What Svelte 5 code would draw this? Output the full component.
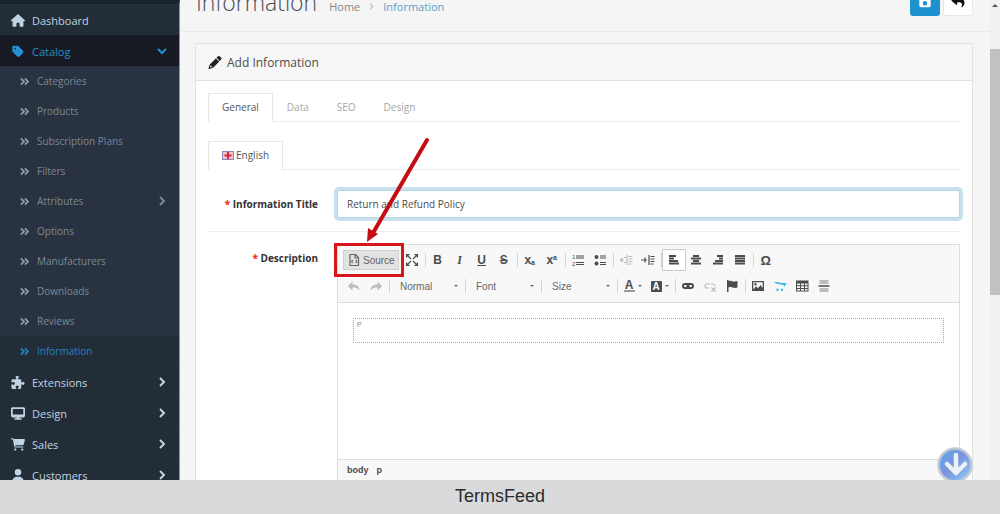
<script lang="ts">
  // OpenCart admin: the "Add Information" form with its rich text editor, plus the callout on Source.

  interface Shape {
    /** Filled outline, on a 16 x 16 grid. */
    fill?: string;
    /** Stroked line, on the same grid. */
    line?: string;
  }

  const solid = {
    house: {
      box: "0 0 576 512",
      d: "M575.8 255.5c0 18-15 32.1-32 32.1h-32l.7 160.2c0 2.7-.2 5.4-.5 8.1V472c0 22.1-17.9 40-40 40H392c-22.1 0-40-17.9-40-40v-88c0-17.7-14.3-32-32-32h-64c-17.7 0-32 14.3-32 32v88c0 22.1-17.9 40-40 40h-80c-22.1 0-40-17.9-40-40V287.6H32c-18 0-32-14-32-32.1c0-9 3-17 10-24L266.4 8c7-7 15-8 22-8s15 2 21 7L564.8 231.5c8 7 12 15 11 24z",
    },
    tag: {
      box: "0 0 448 512",
      d: "M0 80V229.5c0 17 6.7 33.3 18.7 45.3l176 176c25 25 65.5 25 90.5 0L418.7 317.3c25-25 25-65.5 0-90.5l-176-176c-12-12-28.3-18.7-45.3-18.7H48C21.5 32 0 53.5 0 80zm112 32a32 32 0 1 1 0 64 32 32 0 1 1 0-64z",
    },
    puzzle: {
      box: "0 0 512 512",
      d: "M192 104.8c0-9.2-5.8-17.3-13.2-22.8C167.2 73.3 160 61.3 160 48c0-26.5 28.7-48 64-48s64 21.5 64 48c0 13.3-7.2 25.3-18.8 34c-7.4 5.5-13.2 13.6-13.2 22.8c0 12.8 10.4 23.2 23.2 23.2H336c26.5 0 48 21.5 48 48v56.8c0 12.8 10.4 23.2 23.2 23.2c9.2 0 17.3-5.8 22.8-13.2c8.7-11.6 20.7-18.8 34-18.8c26.5 0 48 28.7 48 64s-21.5 64-48 64c-13.3 0-25.3-7.2-34-18.8c-5.5-7.4-13.6-13.2-22.8-13.2c-12.8 0-23.2 10.4-23.2 23.2V464c0 26.5-21.5 48-48 48H279.2c-12.8 0-23.2-10.4-23.2-23.2c0-9.2 5.8-17.3 13.2-22.8c11.6-8.7 18.8-20.7 18.8-34c0-26.5-28.7-48-64-48s-64 21.5-64 48c0 13.3 7.2 25.3 18.8 34c7.4 5.5 13.2 13.6 13.2 22.8c0 12.8-10.4 23.2-23.2 23.2H48c-26.5 0-48-21.5-48-48V343.2C0 330.4 10.4 320 23.2 320c9.2 0 17.3 5.8 22.8 13.2C54.7 344.8 66.7 352 80 352c26.5 0 48-28.7 48-64s-21.5-64-48-64c-13.3 0-25.3 7.2-34 18.8C40.5 250.2 32.4 256 23.2 256C10.4 256 0 245.6 0 232.8V176c0-26.5 21.5-48 48-48H168.8c12.8 0 23.2-10.4 23.2-23.2z",
    },
    desktop: {
      box: "0 0 576 512",
      d: "M64 0C28.7 0 0 28.7 0 64V352c0 35.3 28.7 64 64 64H240l-10.7 32H160c-17.7 0-32 14.3-32 32s14.3 32 32 32H416c17.7 0 32-14.3 32-32s-14.3-32-32-32H346.7L336 416H512c35.3 0 64-28.7 64-64V64c0-35.3-28.7-64-64-64H64zM504 72V296H72V72H504z",
    },
    cart: {
      box: "0 0 576 512",
      d: "M0 24C0 10.7 10.7 0 24 0H69.5c22 0 41.5 12.8 50.6 32h411c26.3 0 45.5 25 38.6 50.4l-41 152.3c-8.5 31.4-37 53.3-69.5 53.3H170.7l5.4 28.5c2.2 11.3 12.1 19.5 23.6 19.5H488c13.3 0 24 10.7 24 24s-10.7 24-24 24H199.7c-34.6 0-64.3-24.6-70.7-58.5L77.4 54.5c-.7-3.8-4-6.500-7.9-6.500H24C10.7 48 0 37.3 0 24zM128 464a48 48 0 1 1 96 0 48 48 0 1 1 -96 0zm336-48a48 48 0 1 1 0 96 48 48 0 1 1 0-96z",
    },
    user: {
      box: "0 0 448 512",
      d: "M224 256A128 128 0 1 0 224 0a128 128 0 1 0 0 256zm-45.7 48C79.8 304 0 383.8 0 482.3C0 498.7 13.3 512 29.7 512H418.3c16.4 0 29.7-13.3 29.7-29.7C448 383.8 368.2 304 269.7 304H178.3z",
    },
    pencil: {
      box: "0 0 512 512",
      d: "M410.3 231l11.3-11.3-33.9-33.9-62.1-62.1L291.7 89.8l-11.3 11.3-22.6 22.6L58.6 322.9c-10.4 10.4-18 23.3-22.2 37.4L1 480.7c-2.5 8.4-.2 17.5 6.1 23.7s15.3 8.5 23.7 6.1l120.3-35.4c14.1-4.2 27-11.8 37.4-22.2L387.7 253.7 410.3 231zM160 412l-4 14c-4 3.100-3.500 1.400-8.300 2.900L82 448l-18-18 19-64c1.400-4.900 3-6 5-8l12-4v42c0 8.800 7.200 16 16 16h44zM362.7 18.7L348.3 33.2 325.7 55.8 314.3 67.1l33.9 33.9 62.1 62.1 33.9 33.9 11.3-11.3 22.6-22.6 14.5-14.5c25-25 25-65.5 0-90.5L453.3 18.7c-25-25-65.5-25-90.5 0z",
    },
    save: {
      box: "0 0 448 512",
      d: "M64 32C29 32 0 61 0 96v320c0 35 29 64 64 64h320c35 0 64-29 64-64V173c0-17-7-33-19-45l-77-77c-12-12-28-19-45-19H64zm20 44h230v110H84zM224 240c50 0 84 34 84 88s-34 88-84 88s-84-34-84-88s34-88 84-88z",
    },
    reply: {
      box: "0 0 512 512",
      d: "M205 34.8c11.5 5.1 19 16.6 19 29.2v64H336c97.2 0 176 78.8 176 176c0 113.3-81.5 163.9-100.2 174.1c-2.5 1.4-5.3 1.9-8.1 1.9c-10.9 0-19.7-8.9-19.7-19.7c0-7.5 4.3-14.4 9.8-19.5c9.4-8.8 22.2-26.4 22.2-56.7c0-53-43-96-96-96H224v64c0 12.6-7.4 24.1-19 29.2s-25 3-34.4-5.4l-160-144C3.9 225.7 0 217.1 0 208s3.9-17.7 10.6-23.8l160-144c9.4-8.5 22.9-10.6 34.4-5.4z",
    },
  };

  const shapes: Record<string, Shape> = {
    source: { line: "M4 2.5h5.5l3 3v8h-8.5zM9 2.5v3.5h3.5M6.8 8L5.6 9.5l1.2 1.5M9.7 8l1.2 1.5-1.2 1.5" },
    maximize: {
      fill: "M2 2h4L2 6zM14 2v4l-4-4zM2 14v-4l4 4zM14 14h-4l4-4z",
      line: "M3 3l4 4M13 3L9 7M3 13l4-4M13 13L9 9",
    },
    outdent: { line: "M2 8h4M9 3v10M10.5 4.5h4M10.5 7h4M10.5 9.5h4M10.5 12h3M6 5.5h2M6 10.5h2M4.5 6L2.5 8l2 2" },
    indent: { line: "M1 8h6M5 5.5v5M9 3v10M10.5 4.5h4M10.5 7h4M10.5 9.5h4M10.5 12h3" },
    left: { fill: "M3 3h7v2H3zM3 5.500h5v2H3zM3 8h9v2H3zM3 10.500h10v2H3z" },
    center: { fill: "M5 3h6v2H5zM3 5.500h10v2H3zM5 8h6v2H5zM3 10.500h10v2H3z" },
    right: { fill: "M7 3h6v2H7zM9 5.500h4v2H9zM5 8h8v2H5zM3 10.500h10v2H3z" },
    justify: { fill: "M3 3h10v2H3zM3 5.500h10v2H3zM3 8h10v2H3zM3 10.500h10v2H3z" },
    undo: { fill: "M6.5 3.5v3C11 6.5 13.3 8.5 13.5 12.5C11.5 10 9.5 9.5 6.5 9.5v3L2 8z" },
    redo: { fill: "M9.5 3.5v3C5 6.5 2.7 8.5 2.5 12.5C4.5 10 6.5 9.5 9.5 9.5v3L14 8z" },
    link: {
      fill: "M5 5h6a3 3 0 0 1 0 6H5a3 3 0 0 1 0-6zM5 7a1 1 0 0 0 0 2h1.5V7zM11 7H9.5v2H11a1 1 0 0 0 0-2z",
    },
    unlink: { line: "M8 6H5a2 2 0 0 0 0 4h2M9 6h2a2 2 0 0 1 2 2M9.5 9.5l4 4M13.5 9.5l-4 4" },
    flag: { fill: "M3 2h1.5v1C7 1.8 8.5 4.5 13.5 3v6.5C9.5 11 7.5 8 4.5 9.5V14H3z" },
    image: { fill: "M2 3h12v10H2zM3.3 4.3v7.2l2.7-3.2 2 2 2.6-3.3 2.1 3V4.3zM5.5 5a1.2 1.2 0 1 1 0 2.4a1.2 1.2 0 1 1 0-2.4z" },
    cart: {
      fill: "M2 4h3.5c3 1.5 6 .5 9.5 1.5c-1.5 1-2 2.5-3.5 4c.8-1.5.5-2.3-.5-2.7c-3-.8-6-.3-9-2.8zM5.5 10.5a1.2 1.2 0 1 1 0 2.4a1.2 1.2 0 1 1 0-2.4zM10 10.5a1.2 1.2 0 1 1 0 2.4a1.2 1.2 0 1 1 0-2.4z",
    },
    table: { fill: "M2 2.5h12.5v11H2zM3 5.5v1.8h3V5.5zM7 5.5v1.8h3V5.5zM11 5.5v1.8h2.5V5.5zM3 8.3v1.7h3V8.3zM7 8.3v1.7h3V8.3zM11 8.3v1.7h2.5V8.3zM3 11v1.5h3V11zM7 11v1.5h3V11zM11 11v1.5h2.5V11z" },
  };

  const submenu = [
    "Categories",
    "Products",
    "Subscription Plans",
    "Filters",
    "Attributes",
    "Options",
    "Manufacturers",
    "Downloads",
    "Reviews",
    "Information",
  ];

  const sections = [
    { label: "Extensions", icon: solid.puzzle },
    { label: "Design", icon: solid.desktop },
    { label: "Sales", icon: solid.cart },
    { label: "Customers", icon: solid.user },
  ];

  const tabs = ["General", "Data", "SEO", "Design"];
  let activeTab = $state("General");
  let title = $state("Return and Refund Policy");
</script>

{#snippet icon(i: { box: string; d: string })}
  <svg class="icon" viewBox={i.box} aria-hidden="true"><path d={i.d} fill="currentColor" fill-rule="evenodd" /></svg>
{/snippet}

{#snippet chevron(kind: string)}
  <svg class="chevron" class:down={kind === "down"} viewBox="0 0 10 10" aria-hidden="true">
    <path d="M3 1l4 4-4 4" />
  </svg>
{/snippet}

{#snippet glyph(name: string)}
  <svg class="glyph" viewBox="0 0 16 16" aria-hidden="true">
    {#if shapes[name].fill}<path d={shapes[name].fill} fill="currentColor" fill-rule="evenodd" />{/if}
    {#if shapes[name].line}<path d={shapes[name].line} fill="none" stroke="currentColor" stroke-width="1.2" />{/if}
  </svg>
{/snippet}

{#snippet tool(name: string, state: string = "")}
  <button type="button" class="tool {state}" aria-label={name}>{@render glyph(name)}</button>
{/snippet}

{#snippet combo(name: string, value: string)}
  <span class="combo">
    <select aria-label={name}><option>{value}</option></select>
    <i class="caret"></i>
  </span>
{/snippet}

<div class="shell">
  <div class="viewport">
    <nav class="sidebar">
      <ul class="menu">
        <li><a href="#dashboard">{@render icon(solid.house)}<span>Dashboard</span></a></li>
        <li>
          <a href="#catalog" class="open">{@render icon(solid.tag)}<span>Catalog</span>{@render chevron("down")}</a>
          <ul class="submenu">
            {#each submenu as label}
              <li>
                <a href="#{label}" class:current={label === "Information"}>
                  <svg class="angles" viewBox="0 0 10 10" aria-hidden="true"><path d="M1 1.5L4.5 5 1 8.5M5.5 1.5L9 5 5.5 8.5" /></svg>
                  <span>{label}</span>
                  {#if label === "Attributes"}{@render chevron("right")}{/if}
                </a>
              </li>
            {/each}
          </ul>
        </li>
        {#each sections as section}
          <li>
            <a href="#{section.label}">{@render icon(section.icon)}<span>{section.label}</span>{@render chevron("right")}</a>
          </li>
        {/each}
      </ul>
    </nav>

    <main class="content">
      <header class="page-header">
        <div class="heading">
          <h1>Information</h1>
          <div class="crumbs">
            <a href="#home">Home</a>
            {@render chevron("right")}
            <a href="#information" class="here">Information</a>
          </div>
        </div>
        <div class="actions">
          <button type="button" class="save" aria-label="Save">{@render icon(solid.save)}</button>
          <button type="button" class="back" aria-label="Back">{@render icon(solid.reply)}</button>
        </div>
      </header>

      <section class="card">
        <h2>{@render icon(solid.pencil)}Add Information</h2>
        <form class="card-body">
          <div class="tabs">
            {#each tabs as tab}
              <button type="button" class:active={tab === activeTab} onclick={() => (activeTab = tab)}>{tab}</button>
            {/each}
          </div>
          <div class="tabs language">
            <button type="button" class="active">
              <svg class="flag" viewBox="0 0 12 9" aria-hidden="true">
                <rect width="12" height="9" fill="#8b86b5" />
                <rect x="1" y="1" width="10" height="7" fill="#f3c4cc" />
                <path d="M6 1v7M2.5 4.5h7" stroke="#d5283c" stroke-width="2" />
              </svg>
              English
            </button>
          </div>

          <div class="row">
            <label for="title"><b>*</b> Information Title</label>
            <input id="title" type="text" bind:value={title} />
          </div>
          <div class="row description">
            <span class="label" id="description-label"><b>*</b> Description</span>
            <div class="editor">
              <div class="toolbar">
                <div class="tools">
                  <div class="callout">
                    <button type="button" class="source">{@render glyph("source")}Source</button>
                    <span class="frame"></span>
                    <svg class="arrow" viewBox="0 0 70 108" aria-hidden="true">
                      <path d="M64 4L10 97" stroke="#c40d12" stroke-width="4" stroke-linecap="round" />
                      <path d="M4 106l1-14 10 6z" fill="#c40d12" />
                    </svg>
                  </div>
                  {@render tool("maximize")}
                  <i class="sep"></i>
                  <button type="button" class="tool letter">B</button>
                  <button type="button" class="tool letter italic">I</button>
                  <button type="button" class="tool letter under">U</button>
                  <button type="button" class="tool letter strike">S</button>
                  <i class="sep"></i>
                  <button type="button" class="tool letter">x<sub>a</sub></button>
                  <button type="button" class="tool letter">x<sup>a</sup></button>
                  <i class="sep"></i>
                  <button type="button" class="tool" aria-label="numbered list">
                    <svg class="glyph" viewBox="0 0 16 16">
                      <path d="M6 4h8M6 6h8M6 10.5h8M6 12.5h8" stroke="currentColor" stroke-width="1.2" />
                      <text x="2" y="7">1</text>
                      <text x="2" y="14">2</text>
                    </svg>
                  </button>
                  <button type="button" class="tool" aria-label="bulleted list">
                    <svg class="glyph" viewBox="0 0 16 16">
                      <path d="M8 4h6M8 6h6M8 10.5h6M8 12.5h6" stroke="currentColor" stroke-width="1.2" />
                      <circle cx="4.5" cy="5" r="2" fill="currentColor" />
                      <circle cx="4.5" cy="11.5" r="2" fill="currentColor" />
                    </svg>
                  </button>
                  <i class="sep"></i>
                  {@render tool("outdent", "off")}
                  {@render tool("indent")}
                  <i class="sep"></i>
                  {@render tool("left", "on")}
                  {@render tool("center")}
                  {@render tool("right")}
                  {@render tool("justify")}
                  <i class="sep"></i>
                  <button type="button" class="tool letter omega">Ω</button>
                </div>
                <div class="tools">
                  {@render tool("undo", "off")}
                  {@render tool("redo", "off")}
                  <i class="sep"></i>
                  {@render combo("Format", "Normal")}
                  <i class="sep"></i>
                  {@render combo("Font", "Font")}
                  <i class="sep"></i>
                  {@render combo("Size", "Size")}
                  <i class="sep"></i>
                  <button type="button" class="tool letter color"><span class="ink">A</span><i class="caret"></i></button>
                  <button type="button" class="tool letter color"><span class="fill">A</span><i class="caret"></i></button>
                  <i class="sep"></i>
                  {@render tool("link")}
                  {@render tool("unlink", "off")}
                  {@render tool("flag")}
                  <i class="sep"></i>
                  {@render tool("image")}
                  {@render tool("cart", "brand")}
                  {@render tool("table")}
                  <button type="button" class="tool" aria-label="horizontal line">
                    <svg class="glyph" viewBox="0 0 16 16">
                      <path d="M3.5 2h9v4h-9zM3.5 10h9v4h-9z" fill="#bcbcbc" />
                      <path d="M2.5 8h11" stroke="currentColor" stroke-width="1.5" />
                    </svg>
                  </button>
                </div>
              </div>
              <div class="canvas" role="textbox" tabindex="0" aria-labelledby="description-label">
                <div class="block"><span>P</span></div>
              </div>
              <div class="path"><span>body</span><span>p</span></div>
            </div>
          </div>
        </form>
      </section>
    </main>

    <div class="scrollbar">
      <i class="up"></i>
      <i class="thumb"></i>
    </div>

    <svg class="badge" viewBox="0 0 36 36" aria-hidden="true">
      <defs>
        <linearGradient id="orb" x1="0" y1="0" x2="1" y2="1">
          <stop offset="0" stop-color="#58b0ee" />
          <stop offset="0.45" stop-color="#7a92e0" />
          <stop offset="1" stop-color="#8fd0f6" />
        </linearGradient>
      </defs>
      <circle cx="18" cy="18" r="16.5" fill="url(#orb)" stroke="#c3cad2" stroke-width="2.5" />
      <path d="M19 8v18M10 17l9 9 9-9" fill="none" stroke="#eef0f4" stroke-width="4.5" stroke-linecap="round" stroke-linejoin="round" />
    </svg>
  </div>

  <footer>TermsFeed</footer>
</div>

<style>
  :global(body) {
    background: #d8dadc;
  }
  .shell {
    display: flex;
    flex-direction: column;
    height: 100vh;
    font-family: "Open Sans", sans-serif;
    font-size: 10px;
    color: #4c4c4c;
  }
  .viewport {
    position: relative;
    flex: 1;
    min-height: 0;
    display: flex;
    overflow: hidden;
    background: #f5f5f5;
  }
  button,
  input,
  select {
    font: inherit;
    color: inherit;
    margin: 0;
  }
  button {
    padding: 0;
    border: 0;
    background: none;
  }
  a {
    color: inherit;
    text-decoration: none;
  }
  ul {
    list-style: none;
    margin: 0;
    padding: 0;
  }
  svg {
    display: block;
    flex: none;
  }
  .icon {
    width: 14px;
    height: 13px;
  }
  .chevron {
    width: 10px;
    height: 10px;
  }
  .chevron path,
  .angles path {
    fill: none;
    stroke: currentColor;
    stroke-width: 2;
  }
  .chevron.down {
    transform: rotate(90deg);
  }

  /* Sidebar */
  .sidebar {
    flex: none;
    width: 179px;
    background: #232d37;
    border-top: 4px solid #1a2430;
    border-right: 1px solid #8b939b;
  }
  .menu > li > a {
    display: flex;
    align-items: center;
    gap: 7px;
    box-sizing: border-box;
    height: 31px;
    padding: 0 12px 0 11px;
    border-top: 1px solid #27323c;
    font-size: 11px;
    color: #c0d3e2;
  }
  .menu a span {
    flex: 1;
  }
  .menu > li > a.open {
    background: #171a22;
    border-color: #171a22;
    color: #2390d2;
  }
  .submenu {
    background: #293241;
  }
  .submenu a {
    display: flex;
    align-items: center;
    gap: 8px;
    height: 30px;
    padding: 0 12px 0 20px;
    color: #7b8994;
  }
  .submenu a.current {
    background: #232d37;
    color: #2382c0;
  }
  .angles {
    width: 9px;
    height: 9px;
    color: #8d9ba7;
  }
  .current .angles {
    color: inherit;
  }

  /* Page header, scrolled partly out of view */
  .content {
    flex: 1;
    min-width: 0;
    margin-top: -23px;
  }
  .page-header {
    display: flex;
    justify-content: space-between;
    padding: 9px 17px 15px 16px;
    border-bottom: 1px solid #ebebeb;
  }
  .heading {
    display: flex;
    align-items: baseline;
    gap: 12px;
    height: 30px;
  }
  h1 {
    margin: 0;
    font-size: 23px;
    line-height: 32px;
    font-weight: 300;
    color: #4c4d5a;
  }
  .crumbs {
    display: flex;
    align-items: center;
    gap: 8px;
    font-size: 11px;
    color: #858585;
  }
  .crumbs .chevron {
    width: 7px;
    height: 7px;
    color: #c8c8c8;
  }
  .here {
    color: #5a9fc9;
  }
  .actions {
    display: flex;
    gap: 3px;
  }
  .actions button {
    display: grid;
    place-items: center;
    width: 30px;
    height: 30px;
    border-radius: 3px;
  }
  .save {
    background: #1e91cf;
    color: #fff;
  }
  .back {
    background: #fff;
    box-shadow: inset 0 0 0 1px #e8e8e8;
    color: #111;
  }

  /* Card */
  .card {
    margin: 11px 17px 0 15px;
    border: 1px solid #e2e2e2;
    background: #fff;
  }
  h2 {
    display: flex;
    align-items: center;
    gap: 5px;
    height: 36px;
    margin: 0;
    padding: 0 12px;
    border-bottom: 1px solid #e2e2e2;
    background: #f7f7f7;
    font-size: 12px;
    font-weight: 400;
  }
  h2 .icon {
    color: #222;
  }
  .card-body {
    padding: 12px;
  }
  .tabs {
    display: flex;
    border-bottom: 1px solid #eee;
  }
  .tabs button {
    display: flex;
    align-items: center;
    gap: 2px;
    box-sizing: border-box;
    height: 29px;
    padding: 0 13px 2px;
    border: 1px solid transparent;
    border-bottom: 0;
    margin-bottom: -1px;
    color: #a6a6a6;
  }
  .tabs button.active {
    border-color: #e8e8e8;
    background: #fff;
    color: #555;
  }
  .language {
    margin-top: 19px;
  }
  .flag {
    width: 12px;
    height: 9px;
  }
  .row {
    display: grid;
    grid-template-columns: 110px 1fr;
    gap: 19px;
    padding: 20px 0 13px;
    border-bottom: 1px solid #eee;
  }
  .row.description {
    padding-top: 12px;
  }
  .row label,
  .label {
    padding-top: 7px;
    line-height: 15px;
    font-weight: 700;
    text-align: right;
    color: #333;
  }
  .row b {
    color: #e33;
  }
  input {
    box-sizing: border-box;
    width: 100%;
    height: 28px;
    padding: 0 9px;
    border: 1px solid #b4d6e8;
    border-radius: 2px;
    outline: 0;
    background: #fff;
    box-shadow: 0 0 0 3px #c9e1ee;
  }

  /* Editor */
  .editor {
    border: 1px solid #dcdcdc;
    font-family: "Liberation Sans", sans-serif;
    font-size: 10px;
    color: #4c4c4c;
  }
  .toolbar {
    display: flex;
    flex-direction: column;
    gap: 4px;
    padding: 4px 5px 5px;
    border-bottom: 1px solid #dcdcdc;
    background: #f8f8f8;
  }
  .tools {
    display: flex;
    align-items: center;
    height: 22px;
  }
  .callout {
    position: relative;
    margin-right: 2px;
  }
  .source {
    display: flex;
    align-items: center;
    gap: 1px;
    box-sizing: border-box;
    height: 20px;
    padding: 0 3px 0 2px;
    border: 1px solid #cfcfcf;
    background: #e2e2e2;
    color: #666;
  }
  .frame {
    position: absolute;
    inset: -7px -5px -7px -9px;
    border: 3px solid #d8151b;
    pointer-events: none;
  }
  .arrow {
    position: absolute;
    left: 20px;
    bottom: 26px;
    width: 70px;
    height: 108px;
    pointer-events: none;
  }
  .glyph {
    width: 16px;
    height: 16px;
  }
  .glyph text {
    font-size: 6px;
    fill: currentColor;
  }
  .tool {
    display: flex;
    align-items: center;
    justify-content: center;
    width: 22px;
    height: 20px;
  }
  .tool.off {
    color: #bdbdbd;
  }
  .tool.brand {
    color: #35b5e8;
  }
  .tool.on {
    background: #fff;
    box-shadow: 0 0 0 1px #ccc;
  }
  .letter {
    font-size: 12px;
    font-weight: 700;
  }
  .italic {
    font-family: "Liberation Serif", serif;
    font-style: italic;
  }
  .under {
    text-decoration: underline;
  }
  .strike {
    text-decoration: line-through;
  }
  .omega {
    font-size: 13px;
  }
  .letter sub,
  .letter sup {
    font-size: 7px;
    line-height: 1;
  }
  .letter sub {
    padding-top: 5px;
  }
  .letter sup {
    padding-bottom: 5px;
  }
  .color {
    gap: 3px;
    width: 27px;
  }
  .ink {
    width: 11px;
    border-bottom: 2px solid #999;
    line-height: 10px;
  }
  .fill {
    width: 11px;
    border-radius: 1px;
    background: #4c4c4c;
    color: #fff;
    font-size: 10px;
    line-height: 11px;
  }
  .caret {
    border: 2px solid transparent;
    border-top-color: #666;
    border-bottom: 0;
  }
  .sep {
    width: 1px;
    height: 14px;
    margin: 0 1px 0 2px;
    background: #d6d6d6;
  }
  .combo {
    display: flex;
    align-items: center;
    box-sizing: border-box;
    width: 72px;
    padding: 0 5px 0 9px;
  }
  .combo select {
    flex: 1;
    min-width: 0;
    padding: 0;
    border: 0;
    background: none;
    appearance: none;
    color: #666;
  }
  .canvas {
    box-sizing: border-box;
    height: 156px;
    padding: 15px;
  }
  .block {
    height: 23px;
    border: 1px dotted #aaa;
  }
  .block span {
    display: block;
    padding: 2px 3px;
    font-size: 7px;
    line-height: 7px;
    color: #888;
  }
  .path {
    display: flex;
    gap: 8px;
    padding: 0 9px;
    border-top: 1px solid #dcdcdc;
    background: #f8f8f8;
    font-size: 9px;
    line-height: 21px;
    font-weight: 700;
  }

  /* Browser scrollbar */
  .scrollbar {
    flex: none;
    display: flex;
    flex-direction: column;
    align-items: center;
    width: 10px;
    background: #f1f1f1;
  }
  .up {
    margin: 4px 0 42px;
    border: 3px solid transparent;
    border-top: 0;
    border-bottom-color: #555;
  }
  .thumb {
    width: 100%;
    height: 246px;
    background: #c1c1c1;
  }

  /* Download badge floating over the page corner */
  .badge {
    position: absolute;
    right: 27px;
    bottom: -3px;
    width: 36px;
    height: 36px;
  }

  footer {
    flex: none;
    height: 34px;
    background: #d8dadc;
    font-family: "Liberation Sans", sans-serif;
    font-size: 18px;
    line-height: 32px;
    text-align: center;
    color: #2b2b2b;
  }
</style>
